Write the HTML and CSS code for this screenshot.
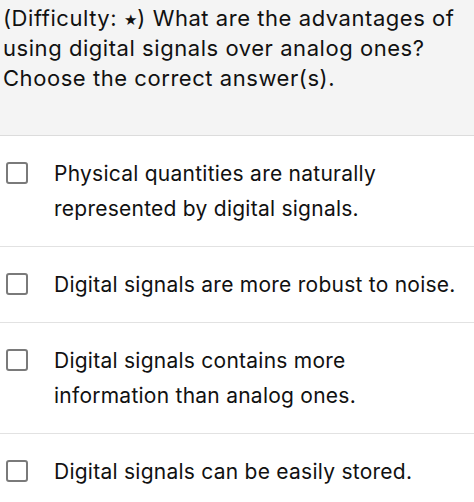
FILE: index.html
```html
<!DOCTYPE html>
<html>
<head>
<meta charset="utf-8">
<link rel="stylesheet" href="styles.css">
</head>
<body>
<div class="question">(Difficulty: <span class="star">★</span>) What are the advantages of using digital signals over analog ones? Choose the correct answer(s).</div>
<ul class="options">
  <li class="option"><span class="box"></span><span class="label">Physical quantities are naturally represented by digital signals.</span></li>
  <li class="option"><span class="box"></span><span class="label">Digital signals are more robust to noise.</span></li>
  <li class="option"><span class="box"></span><span class="label">Digital signals contains more information than analog ones.</span></li>
  <li class="option"><span class="box"></span><span class="label">Digital signals can be easily stored.</span></li>
</ul>
</body>
</html>
```
FILE: styles.css
```css
html, body {
  margin: 0;
  padding: 0;
  background: #ffffff;
}
body {
  font-family: Inter, "Noto Sans", sans-serif;
  color: #111111;
}
.question {
  background: #f4f4f4;
  font-size: 22px;
  letter-spacing: 0.55px;
  line-height: 30px;
  padding: 3px 6px 42px 3px;
  height: 90px;
  border-bottom: 1px solid #dcdcdc;
}
.star {
  font-family: "DejaVu Sans", sans-serif;
  font-size: 15px;
  line-height: 0;
  letter-spacing: 0;
  vertical-align: 1px;
}
.options {
  list-style: none;
  margin: 0;
  padding: 0;
}
.option {
  display: flex;
  align-items: flex-start;
  padding: 20px 10px 20px 6px;
  border-bottom: 1px solid #e2e2e2;
}
.option:last-child {
  border-bottom: none;
}
.box {
  flex: none;
  width: 18px;
  height: 18px;
  border: 2px solid #7a7a7a;
  border-radius: 3px;
  margin-top: 6px;
  margin-right: 26px;
}
.label {
  font-size: 21px;
  letter-spacing: 0.25px;
  line-height: 35px;
}
```
